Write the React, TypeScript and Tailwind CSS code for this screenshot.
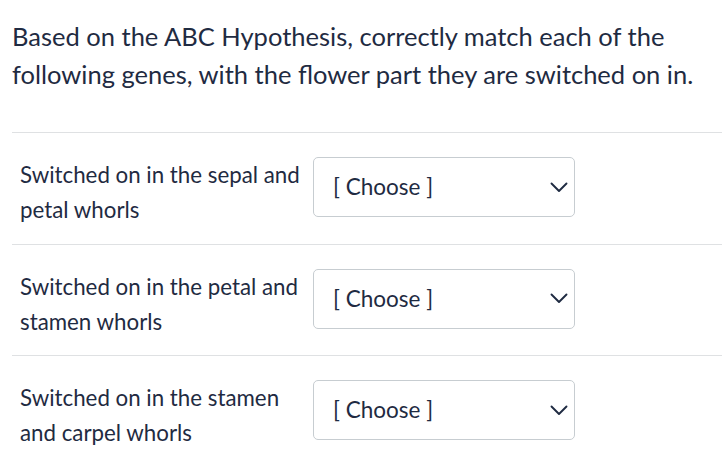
const rows = [
  "Switched on in the sepal and petal whorls",
  "Switched on in the petal and stamen whorls",
  "Switched on in the stamen and carpel whorls",
];

function Chevron() {
  return (
    <svg width="18" height="11" viewBox="0 0 18 11" fill="none" stroke="currentColor" strokeWidth="1.9" strokeLinecap="round" strokeLinejoin="round">
      <polyline points="1.5,1.5 9,9 16.5,1.5" />
    </svg>
  );
}

function Select() {
  return (
    <div className="flex h-[60px] w-[262px] shrink-0 items-center justify-between rounded-[5px] border border-[#c7cdd1] bg-white pl-[19px] pr-[6px]">
      <span className="text-[22.5px]">[ Choose ]</span>
      <Chevron />
    </div>
  );
}

export default function App() {
  return (
    <div
      className="min-h-[462px] w-[722px] bg-white pl-3 text-[#1f2b42]"
      style={{ fontFamily: "Lato, 'Noto Sans', sans-serif" }}
    >
      <p className="pt-[17px] pb-[39px] text-[25.5px] leading-[38px]">
        Based on the ABC Hypothesis, correctly match each of the following genes, with the flower part they are switched on in.
      </p>
      {rows.map((label) => (
        <div key={label} className="flex items-start gap-[5px] border-t border-[#dfe1e3] pl-2 pt-[24px] pb-[16.5px]">
          <div className="w-[288px] text-[22.3px] leading-[35px]">{label}</div>
          <Select />
        </div>
      ))}
    </div>
  );
}
